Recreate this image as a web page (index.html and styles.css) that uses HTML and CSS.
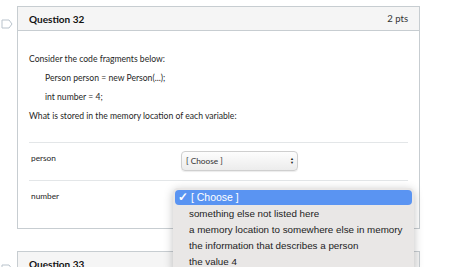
FILE: index.html
```html
<!DOCTYPE html>
<html lang="en">
  <head>
    <meta charset="UTF-8" />
    <title>Question 32</title>
    <link rel="stylesheet" href="styles.css">
  </head>

  <body>
    <!-- Питання 32 -->
    <div class="question">
      <div class="flag">
        <svg width="12" height="10" viewBox="0 0 12 10">
          <path d="M1 1 H8 L11 5 L8 9 H1 Z" fill="none" stroke="#b9c3cc" stroke-width="1" />
        </svg>
      </div>
      <div class="card">
        <div class="card-header">
          <span class="title">Question 32</span>
          <span class="pts">2 pts</span>
        </div>
        <div class="card-body">
          <p>Consider the code fragments below:</p>
          <p class="code">Person person = new Person(...);</p>
          <p class="code">int number = 4;</p>
          <p>What is stored in the memory location of each variable:</p>

          <div class="answers">
            <div class="answer-row">
              <span class="label">person</span>
              <div class="select">
                <span>[ Choose ]</span>
                <span class="arrows">&#9650;<br />&#9660;</span>
              </div>
            </div>
            <div class="answer-row">
              <span class="label">number</span>
            </div>
          </div>
        </div>
      </div>
    </div>

    <!-- Питання 33 -->
    <div class="question next">
      <div class="flag">
        <svg width="12" height="10" viewBox="0 0 12 10">
          <path d="M1 1 H8 L11 5 L8 9 H1 Z" fill="none" stroke="#b9c3cc" stroke-width="1" />
        </svg>
      </div>
      <div class="card">
        <div class="card-header">
          <span class="title">Question 33</span>
        </div>
      </div>
    </div>

    <!-- Відкритий список -->
    <ul class="dropdown">
      <li class="selected"><span class="check">&#10003;</span> [ Choose ]</li>
      <li>something else not listed here</li>
      <li>a memory location to somewhere else in memory</li>
      <li>the information that describes a person</li>
      <li>the value 4</li>
    </ul>
  </body>
</html>
```

FILE: styles.css
```css
body {
  margin: 0;
  background-color: #fff;
  font-family: Lato, "Liberation Sans", sans-serif;
  color: #2d3b45;
  overflow: hidden;
}

.question {
  display: flex;
  padding-top: 6px;
}

.question.next {
  padding-top: 22px;
}

.flag {
  width: 17px;
  padding-top: 7px;
  padding-left: 1px;
  box-sizing: border-box;
}

.card {
  width: 401px;
  border: 1px solid #c7cdd1;
}

.card-header {
  height: 23px;
  background-color: #f5f5f5;
  border-bottom: 1px solid #c7cdd1;
  display: flex;
  justify-content: space-between;
  align-items: center;
  padding: 0 11px;
}

.title {
  font-weight: bold;
  font-size: 10px;
  color: #111;
}

.pts {
  font-size: 9.5px;
  color: #333;
}

.card-body {
  padding: 23px 11px 10px 11px;
  font-size: 8.6px;
  color: #1f1f1f;
}

.card-body p {
  margin: 0 0 8px 0;
  line-height: 11px;
}

.card-body p.code {
  padding-left: 16px;
}

.answers {
  margin-top: 20px;
}

.answer-row {
  display: flex;
  align-items: flex-start;
  height: 37px;
  border-top: 1px solid #e3e6e8;
  padding-left: 2px;
  font-size: 8.3px;
}

.label {
  width: 150px;
  padding-top: 10px;
}

.select {
  margin-top: 8px;
  width: 108px;
  height: 18px;
  border: 1px solid #cfcfcf;
  border-radius: 4px;
  background: linear-gradient(#fdfdfd, #ececec);
  display: flex;
  align-items: center;
  justify-content: space-between;
  padding: 0 3px 0 4px;
  font-size: 8.3px;
  color: #333;
  box-shadow: 0 1px 1px rgba(0, 0, 0, 0.08);
}

.arrows {
  font-size: 4px;
  line-height: 4px;
  text-align: center;
  color: #222;
}

.dropdown {
  position: absolute;
  left: 173px;
  top: 188px;
  width: 237px;
  margin: 0;
  padding: 2px;
  list-style: none;
  background-color: #e9e7e6;
  border-radius: 5px;
  box-shadow: 0 2px 10px rgba(0, 0, 0, 0.25);
  font-family: "Liberation Sans", Arial, sans-serif;
  font-size: 9.8px;
  color: #222;
}

.dropdown li {
  height: 16px;
  line-height: 16px;
  padding-left: 14px;
  white-space: nowrap;
}

.dropdown li.selected {
  padding-left: 3px;
  height: 15px;
  line-height: 15px;
  margin-bottom: 1px;
  background-color: #5a94f2;
  color: #fff;
  border-radius: 4px;
  font-size: 10.5px;
}

.check {
  font-size: 11.5px;
  font-weight: bold;
}
```
